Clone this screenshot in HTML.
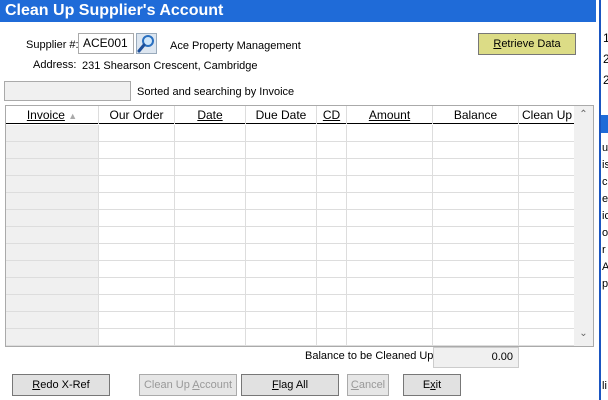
<!DOCTYPE html>
<html><head><style>
*{margin:0;padding:0;box-sizing:border-box}
body{width:608px;height:400px;background:#fff;font-family:"Liberation Sans",Arial,sans-serif;font-size:11px;color:#000;position:relative;overflow:hidden}
.a{position:absolute}
.btn{position:absolute;background:#e1e1e1;border:1px solid #777;text-align:center;font-size:11px;line-height:20px}
.dis{color:#999;border-color:#aaa;background:#e6e6e6}
u{text-decoration:underline}
.hd{position:absolute;top:0;height:18px;line-height:18px;font-size:12px;text-align:center;border-right:1px solid #ddd}
</style></head><body>
<div class="a" style="left:0;top:0;width:596px;height:22px;background:#1f6bd8;color:#fff;font-weight:bold;font-size:16px;line-height:22px;padding-left:5px">Clean Up Supplier's Account</div>
<div class="a" style="left:599px;top:0;width:2px;height:400px;background:#1a55c0"></div>
<div class="a" style="left:601px;top:115px;width:7px;height:18px;background:#1f6bd8"></div>
<div class="a" style="left:603px;top:28px;font-size:12px;line-height:21px">1<br>2<br>2</div>
<div class="a" style="left:602px;top:140px;font-size:11px;line-height:17px">u<br>is<br>co<br>e<br>ic<br>o<br>r<br>A<br>p</div>
<div class="a" style="left:602px;top:380px;font-size:11px">li</div>

<div class="a" style="left:26px;top:39px;font-size:11px">Supplier #:</div>
<div class="a" style="left:78px;top:33px;width:56px;height:21px;border:1px solid #aaa;font-size:12px;line-height:19px;padding-left:4px">ACE001</div>
<div class="a" style="left:136px;top:33px;width:21px;height:21px;background:#dde6f0;border:1px solid #9ab">
<svg width="19" height="19" viewBox="0 0 19 19"><circle cx="11" cy="7" r="5" fill="#cfe6fa" stroke="#2a70c0" stroke-width="2"/><line x1="7" y1="11" x2="2" y2="17" stroke="#1d4f9a" stroke-width="3" stroke-linecap="round"/></svg></div>
<div class="a" style="left:170px;top:40px;font-size:11px">Ace Property Management</div>
<div class="a" style="left:33px;top:59px">Address:</div>
<div class="a" style="left:82px;top:60px">231 Shearson Crescent, Cambridge</div>
<div class="btn" style="left:478px;top:33px;width:98px;height:22px;background:#dcdc86">
<u>R</u>etrieve Data</div>

<div class="a" style="left:4px;top:81px;width:127px;height:20px;background:#f0f0f0;border:1px solid #aaa"></div>
<div class="a" style="left:137px;top:86px">Sorted and searching by Invoice</div>

<div class="a" style="left:5px;top:105px;width:589px;height:242px;border:1px solid #aaa;overflow:hidden">
 <div class="a" style="left:0;top:0;width:568px;height:18px;border-bottom:1px solid #000"></div>
 <div class="hd" style="left:0;width:93px;font-weight:normal"><u>Invoice</u> <span style="color:#aaa;font-size:9px">▲</span></div>
 <div class="hd" style="left:93px;width:76px">Our Order</div>
 <div class="hd" style="left:169px;width:71px"><u>Date</u></div>
 <div class="hd" style="left:240px;width:71px">Due Date</div>
 <div class="hd" style="left:311px;width:30px"><u>CD</u></div>
 <div class="hd" style="left:341px;width:86px"><u>Amount</u></div>
 <div class="hd" style="left:427px;width:86px">Balance</div>
 <div class="hd" style="left:513px;width:56px;text-align:left;padding-left:3px;border:none">Clean Up</div>
 <div class="a" style="left:0;top:19px;width:93px;height:222px;background:#f0f0f0"></div>
 <div class="a" style="left:0;top:19px;width:568px;height:222px;
 background-image:repeating-linear-gradient(to bottom,transparent 0,transparent 16px,#ddd 16px,#ddd 17px)"></div>
 <div class="a" style="left:92px;top:19px;width:1px;height:222px;background:#ddd"></div>
 <div class="a" style="left:168px;top:19px;width:1px;height:222px;background:#ddd"></div>
 <div class="a" style="left:239px;top:19px;width:1px;height:222px;background:#ddd"></div>
 <div class="a" style="left:310px;top:19px;width:1px;height:222px;background:#ddd"></div>
 <div class="a" style="left:340px;top:19px;width:1px;height:222px;background:#ddd"></div>
 <div class="a" style="left:426px;top:19px;width:1px;height:222px;background:#ddd"></div>
 <div class="a" style="left:512px;top:19px;width:1px;height:222px;background:#ddd"></div>
 <div class="a" style="left:568px;top:0;width:19px;height:240px;background:#f0f0f0;color:#666;font-size:10px;text-align:center">
  <div style="position:absolute;top:3px;width:19px">⌃</div>
  <div style="position:absolute;top:222px;width:19px">⌄</div>
 </div>
</div>

<div class="a" style="left:305px;top:350px">Balance to be Cleaned Up:</div>
<div class="a" style="left:433px;top:347px;width:86px;height:21px;background:#f0f0f0;border:1px solid #ccc;text-align:right;padding-right:5px;line-height:19px">0.00</div>

<div class="btn" style="left:12px;top:374px;width:98px;height:22px"><u>R</u>edo X-Ref</div>
<div class="btn dis" style="left:139px;top:374px;width:98px;height:22px">Clean Up <u>A</u>ccount</div>
<div class="btn" style="left:241px;top:374px;width:98px;height:22px"><u>F</u>lag All</div>
<div class="btn dis" style="left:347px;top:374px;width:42px;height:22px"><u>C</u>ancel</div>
<div class="btn" style="left:403px;top:374px;width:58px;height:22px">E<u>x</u>it</div>
</body></html>
